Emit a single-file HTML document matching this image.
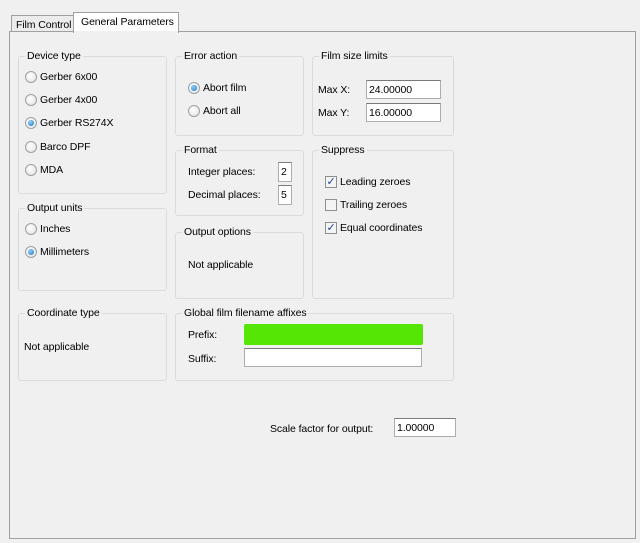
<!DOCTYPE html>
<html><head><style>
*{margin:0;padding:0;box-sizing:border-box}
body{width:640px;height:543px;background:#f0f0f0;font-family:"Liberation Sans",sans-serif;font-size:10.5px;letter-spacing:-0.1px;color:#000;position:relative;overflow:hidden}
.a{position:absolute;white-space:nowrap}
.t{margin-top:1px}
.panel{position:absolute;left:9px;top:31px;width:627px;height:508px;border:1px solid #a0a0a0;background:#f0f0f0}
.grp{position:absolute;border:1px solid #d8dcdf;border-radius:3px}
.gl{position:absolute;top:-7px;left:6px;background:#f0f0f0;padding:0 2px;line-height:13px}
.rad{position:absolute;width:12px;height:12px;border-radius:50%;border:1px solid #9aa0a6;background:radial-gradient(circle at 40% 40%,#fff,#e0e0e0)}
.rad.on::after{content:"";position:absolute;left:2px;top:2px;width:6px;height:6px;border-radius:50%;background:radial-gradient(circle at 40% 35%,#8fd3ff,#1b6fb0)}
.chk{position:absolute;width:12px;height:12px;border:1px solid #8e8f8f;background:#f4f4f4}
.inp{position:absolute;background:#fff;border:1px solid #abadb3;border-top-color:#7a7a7a;padding-left:2px;line-height:18px}
</style></head><body>
<div class="a" style="left:11px;top:15px;width:63px;height:18px;border:1px solid #a0a0a0;border-bottom:none;background:#ececec;padding:3px 0 0 4px;overflow:hidden">Film Control</div>
<div class="panel"></div>
<div class="a" style="left:73px;top:12px;width:106px;height:21px;border:1px solid #a0a0a0;border-bottom:none;background:#fff;padding:3px 0 0 7px">General Parameters</div>
<div class="a" style="left:74px;top:31px;width:104px;height:2px;background:#f0f0f0"></div>

<div class="grp" style="left:18px;top:56px;width:149px;height:138px"><span class="gl">Device type</span></div>
<div class="rad a" style="left:25px;top:71px"></div><span class="a" style="left:40px;top:71px">Gerber 6x00</span>
<div class="rad a" style="left:25px;top:94px"></div><span class="a" style="left:40px;top:94px">Gerber 4x00</span>
<div class="rad on a" style="left:25px;top:117px"></div><span class="a" style="left:40px;top:117px">Gerber RS274X</span>
<div class="rad a" style="left:25px;top:141px"></div><span class="a" style="left:40px;top:141px">Barco DPF</span>
<div class="rad a" style="left:25px;top:164px"></div><span class="a" style="left:40px;top:164px">MDA</span>

<div class="grp" style="left:18px;top:208px;width:149px;height:83px"><span class="gl">Output units</span></div>
<div class="rad a" style="left:25px;top:223px"></div><span class="a" style="left:40px;top:223px">Inches</span>
<div class="rad on a" style="left:25px;top:246px"></div><span class="a" style="left:40px;top:246px">Millimeters</span>

<div class="grp" style="left:18px;top:313px;width:149px;height:68px"><span class="gl">Coordinate type</span></div>
<span class="a" style="left:24px;top:341px">Not applicable</span>

<div class="grp" style="left:175px;top:56px;width:129px;height:80px"><span class="gl">Error action</span></div>
<div class="rad on a" style="left:188px;top:82px"></div><span class="a" style="left:203px;top:82px">Abort film</span>
<div class="rad a" style="left:188px;top:105px"></div><span class="a" style="left:203px;top:105px">Abort all</span>

<div class="grp" style="left:175px;top:150px;width:129px;height:66px"><span class="gl">Format</span></div>
<span class="a" style="left:188px;top:166px">Integer places:</span>
<div class="inp" style="left:278px;top:162px;width:14px;height:20px">2</div>
<span class="a" style="left:188px;top:189px">Decimal places:</span>
<div class="inp" style="left:278px;top:185px;width:14px;height:20px">5</div>

<div class="grp" style="left:175px;top:232px;width:129px;height:67px"><span class="gl">Output options</span></div>
<span class="a" style="left:188px;top:259px">Not applicable</span>

<div class="grp" style="left:175px;top:313px;width:279px;height:68px"><span class="gl">Global film filename affixes</span></div>
<span class="a" style="left:188px;top:329px">Prefix:</span>
<div class="a" style="left:244px;top:324px;width:179px;height:21px;background:#55e606;border-radius:2px"></div>
<span class="a" style="left:188px;top:353px">Suffix:</span>
<div class="inp" style="left:244px;top:348px;width:178px;height:19px"></div>

<div class="grp" style="left:312px;top:56px;width:142px;height:80px"><span class="gl">Film size limits</span></div>
<span class="a" style="left:318px;top:84px">Max X:</span>
<div class="inp" style="left:366px;top:80px;width:75px;height:19px">24.00000</div>
<span class="a" style="left:318px;top:107px">Max Y:</span>
<div class="inp" style="left:366px;top:103px;width:75px;height:19px">16.00000</div>

<div class="grp" style="left:312px;top:150px;width:142px;height:149px"><span class="gl">Suppress</span></div>
<div class="chk a" style="left:325px;top:176px;color:#1e3f9c;font-size:11px;line-height:10px;text-align:center">✓</div><span class="a" style="left:340px;top:176px">Leading zeroes</span>
<div class="chk a" style="left:325px;top:199px"></div><span class="a" style="left:340px;top:199px">Trailing zeroes</span>
<div class="chk a" style="left:325px;top:222px;color:#1e3f9c;font-size:11px;line-height:10px;text-align:center">✓</div><span class="a" style="left:340px;top:222px">Equal coordinates</span>

<span class="a" style="left:270px;top:423px">Scale factor for output:</span>
<div class="inp" style="left:394px;top:418px;width:62px;height:19px">1.00000</div>
</body></html>
